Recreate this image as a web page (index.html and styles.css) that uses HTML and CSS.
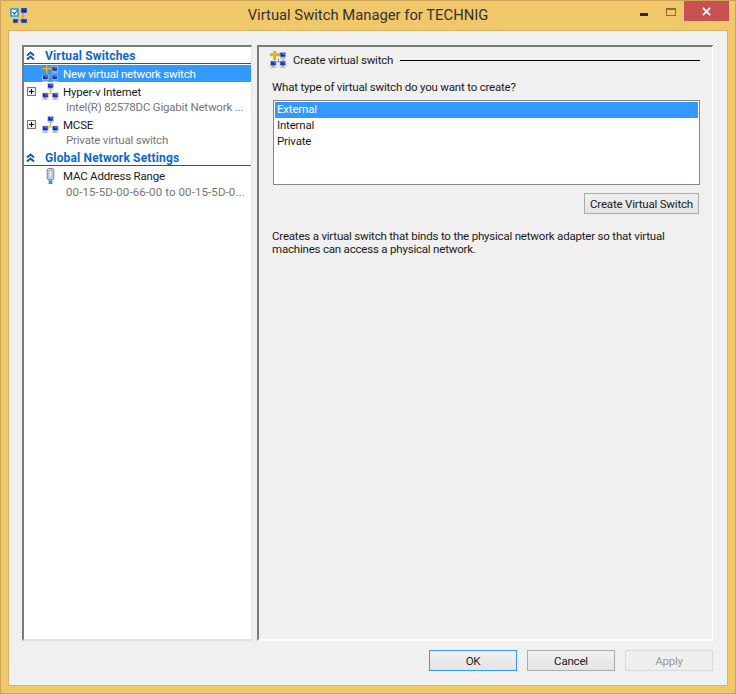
FILE: index.html
```html
<!DOCTYPE html>
<html lang="en">
<head>
    <meta charset="UTF-8">
    <meta name="viewport" content="width=device-width, initial-scale=1.0">
    <title>Virtual Switch Manager for TECHNIG</title>
    <link rel="stylesheet" href="styles.css">
</head>
<body>
    <svg class="defs" width="0" height="0">
        <symbol id="monitor" viewBox="0 0 8 8">
            <rect x="0" y="0" width="7" height="6" fill="#a9bbe0"/>
            <rect x="1" y="1" width="5" height="4" fill="#1a2fb0"/>
            <rect x="3" y="1" width="3" height="2" fill="#3f6fe0"/>
            <rect x="2" y="6" width="3" height="1" fill="#9a9a9a"/>
            <rect x="0" y="7" width="7" height="1" fill="#c4c4c4"/>
        </symbol>
        <symbol id="net-switch" viewBox="0 0 18 18">
            <path d="M9 7v4M4 11.500h11M4 11v1M14 11v1" stroke="#d9a227" stroke-width="1" fill="none"/>
            <use href="#monitor" x="5.500" y="0" width="8" height="8"/>
            <use href="#monitor" x="0" y="10" width="8" height="8"/>
            <use href="#monitor" x="10.500" y="10" width="8" height="8"/>
        </symbol>
        <symbol id="net-new" viewBox="0 0 18 18">
            <path d="M9 8v4M5 11.500h10M14 8v3" stroke="#8a8a8a" stroke-width="1" fill="none"/>
            <use href="#monitor" x="10" y="1" width="8" height="8"/>
            <use href="#monitor" x="0" y="10" width="8" height="8"/>
            <use href="#monitor" x="10" y="10" width="8" height="8"/>
            <path d="M4 0h2v3h4v2H6v4H4V5H0V3h4z" fill="#f6c51e" stroke="#a87a10" stroke-width="0.600"/>
        </symbol>
        <symbol id="chevrons" viewBox="0 0 9 9">
            <path d="M1 4.500l3.500-3 3.500 3M1 8.500l3.500-3 3.500 3" stroke="#0a5fb4" stroke-width="2" fill="none"/>
        </symbol>
        <symbol id="plus-box" viewBox="0 0 9 9">
            <rect x="0.500" y="0.500" width="8" height="8" fill="#e9e9e9" stroke="#777"/>
            <path d="M2 4.500h5M4.500 2v5" stroke="#111" stroke-width="1"/>
        </symbol>
    </svg>

    <div class="window">
        <div class="titlebar">
            <svg class="app-icon" width="18" height="16" viewBox="0 0 18 16">
                <path d="M13 5v6M5 12h8" stroke="#8a8a8a" fill="none"/>
                <rect x="11" y="0" width="6" height="5" fill="#1a2fb0" stroke="#9fb2d8" stroke-width="0.500"/>
                <rect x="3" y="11" width="5" height="4" fill="#1a2fb0" stroke="#9fb2d8" stroke-width="0.500"/>
                <rect x="11" y="11" width="6" height="4" fill="#1a2fb0" stroke="#9fb2d8" stroke-width="0.500"/>
                <rect x="1" y="1" width="7" height="7" fill="#fff" stroke="#1e9be0" stroke-width="1.500"/>
                <path d="M2.500 4l2 2 3-4" stroke="#1a5fb0" stroke-width="1.200" fill="none"/>
            </svg>
            <div class="title-text">Virtual Switch Manager for TECHNIG</div>
            <div class="caption-btns">
                <div class="caption-min"><span></span></div>
                <div class="caption-max"><span></span></div>
                <div class="caption-close">
                    <svg width="9" height="9" viewBox="0 0 10 10">
                        <path d="M1 1l8 8M9 1l-8 8" stroke="#fff" stroke-width="2"/>
                    </svg>
                </div>
            </div>
        </div>

        <div class="client">
            <div class="panels">
                <div class="sidebar">
                    <div class="section-head">
                        <svg class="chevrons" width="9" height="9"><use href="#chevrons"/></svg>
                        <span>Virtual Switches</span>
                    </div>
                    <div class="tree-row selected">
                        <svg class="node-icon" width="17" height="17"><use href="#net-new"/></svg>
                        <span class="row-label">New virtual network switch</span>
                    </div>
                    <div class="tree-row">
                        <svg class="expander" width="9" height="9"><use href="#plus-box"/></svg>
                        <svg class="node-icon" width="17" height="17"><use href="#net-switch"/></svg>
                        <span class="row-label">Hyper-v Internet</span>
                    </div>
                    <div class="tree-sub">Intel(R) 82578DC Gigabit Network ...</div>
                    <div class="tree-row">
                        <svg class="expander" width="9" height="9"><use href="#plus-box"/></svg>
                        <svg class="node-icon" width="17" height="17"><use href="#net-switch"/></svg>
                        <span class="row-label">MCSE</span>
                    </div>
                    <div class="tree-sub">Private virtual switch</div>
                    <div class="section-head">
                        <svg class="chevrons" width="9" height="9"><use href="#chevrons"/></svg>
                        <span>Global Network Settings</span>
                    </div>
                    <div class="tree-row">
                        <svg class="node-icon" width="17" height="17" viewBox="0 0 18 18">
                            <rect x="5.500" y="0.500" width="7" height="12" rx="2" fill="#d4dbe2" stroke="#6f7c88"/>
                            <rect x="7.500" y="2.500" width="3" height="8" fill="#f4f6f8" stroke="#8f9aa5" stroke-width="0.700"/>
                            <rect x="7" y="13" width="4" height="4" fill="#2e9be6"/>
                        </svg>
                        <span class="row-label">MAC Address Range</span>
                    </div>
                    <div class="tree-sub mac-range">00-15-5D-00-66-00 to 00-15-5D-0...</div>
                </div>

                <div class="content">
                    <div class="content-head">
                        <svg class="node-icon" width="17" height="17"><use href="#net-new"/></svg>
                        <span>Create virtual switch</span>
                        <div class="head-rule"></div>
                    </div>
                    <div class="question">What type of virtual switch do you want to create?</div>
                    <div class="listbox">
                        <div class="list-item selected">External</div>
                        <div class="list-item">Internal</div>
                        <div class="list-item">Private</div>
                    </div>
                    <div class="create-row">
                        <button class="btn create-btn">Create Virtual Switch</button>
                    </div>
                    <p class="description">Creates a virtual switch that binds to the physical network adapter so that virtual machines can access a physical network.</p>
                </div>
            </div>

            <div class="footer">
                <button class="btn dialog-btn default">OK</button>
                <button class="btn dialog-btn">Cancel</button>
                <button class="btn dialog-btn disabled">Apply</button>
            </div>
        </div>
    </div>
</body>
</html>
```

FILE: styles.css
```css
* {
    box-sizing: border-box;
    margin: 0;
    padding: 0;
}

body {
    font-family: Roboto, "Open Sans", sans-serif;
    font-size: 11.5px;
    letter-spacing: -0.2px;
    color: #1a1a1a;
    background-color: #f0c869;
    width: 736px;
    height: 694px;
    overflow: hidden;
}

.defs {
    display: block;
    height: 0;
}

.window {
    width: 736px;
    height: 694px;
    display: flex;
    flex-direction: column;
    background-color: #f0c869;
    border: 1px solid #cda458;
    padding: 0 7px 7px;
}

/* title bar */
.titlebar {
    position: relative;
    height: 29px;
    flex: none;
}

.app-icon {
    position: absolute;
    left: 2px;
    top: 7px;
}

.title-text {
    text-align: center;
    font-size: 14.8px;
    letter-spacing: 0;
    line-height: 29px;
    color: #333;
}

.caption-btns {
    position: absolute;
    right: -1px;
    top: 0;
    display: flex;
    align-items: flex-start;
}

.caption-min {
    width: 26px;
    height: 20px;
    display: flex;
    justify-content: center;
}

.caption-min span {
    display: block;
    width: 8px;
    height: 3px;
    margin-top: 12px;
    background-color: #2b2b2b;
}

.caption-max {
    width: 27px;
    height: 20px;
    display: flex;
    justify-content: center;
}

.caption-max span {
    display: block;
    width: 10px;
    height: 8px;
    margin-top: 7px;
    border: 1px solid #8a6f3a;
    border-top-width: 2px;
}

.caption-close {
    width: 45px;
    height: 20px;
    background-color: #c75050;
    display: flex;
    justify-content: center;
    align-items: center;
}

/* client area */
.client {
    flex: 1;
    display: flex;
    flex-direction: column;
    background-color: #f0f0f0;
    border: 1px solid #d9b262;
    padding: 14px 14px 14px 13px;
}

.panels {
    display: flex;
    gap: 5px;
    height: 596px;
}

.sidebar {
    width: 230px;
    background-color: #fff;
    border-top: 2px solid #7a7a7a;
    border-left: 2px solid #7a7a7a;
    border-right: 1px solid #e3e3e3;
    border-bottom: 2px solid #e3e3e3;
}

.section-head {
    height: 17px;
    display: flex;
    align-items: center;
    border-bottom: 1px solid #0a5fb4;
    font-weight: 700;
    font-size: 12px;
    letter-spacing: 0.15px;
    color: #0a68c8;
    padding: 1px 0 0 2px;
    margin-bottom: 1px;
}

.tree-sub + .section-head {
    margin-top: 1px;
}

.chevrons {
    flex: none;
    margin-right: 10px;
}

.tree-row {
    position: relative;
    height: 18px;
    display: flex;
    align-items: center;
    padding-left: 18px;
}

.tree-row.selected {
    background-color: #3399ff;
    color: #fff;
    height: 17px;
}

.expander {
    position: absolute;
    left: 3px;
    top: 5px;
}

.expander + .node-icon + .row-label {
    margin-top: 2px;
}

.node-icon {
    flex: none;
}

.row-label {
    margin-left: 4px;
}

.tree-sub {
    height: 15px;
    line-height: 15px;
    padding-left: 42px;
    color: #767676;
    white-space: nowrap;
}

.tree-sub.mac-range {
    letter-spacing: 0.1px;
}

.content {
    flex: 1;
    background-color: #f0f0f0;
    border-top: 2px solid #7a7a7a;
    border-left: 2px solid #7a7a7a;
    border-right: 1px solid #fff;
    border-bottom: 2px solid #fff;
    padding: 4px 12px 0 13px;
}

.content-head {
    display: flex;
    align-items: center;
    height: 17px;
}

.content-head .node-icon {
    margin-left: -2px;
}

.content-head span {
    margin-left: 6px;
    white-space: nowrap;
}

.head-rule {
    flex: 1;
    height: 1px;
    margin: 2px 0 0 7px;
    background-color: #000;
}

.question {
    margin-top: 10px;
    line-height: 18px;
}

.listbox {
    height: 85px;
    margin: 4px 0 0 1px;
    background-color: #fff;
    border: 1px solid #82858c;
    padding: 1px;
}

.list-item {
    height: 16px;
    line-height: 14px;
    padding-left: 2px;
}

.list-item.selected {
    background-color: #3399ff;
    color: #fff;
}

.create-row {
    display: flex;
    justify-content: flex-end;
    margin-top: 8px;
    padding-right: 1px;
}

.btn {
    font-family: inherit;
    font-size: 11.5px;
    letter-spacing: inherit;
    color: #1a1a1a;
    height: 21px;
    background: linear-gradient(to bottom, #f0f0f0, #e5e5e5);
    border: 1px solid #acacac;
}

.create-btn {
    width: 115px;
}

.description {
    margin-top: 16px;
    line-height: 13px;
    width: 420px;
}

.footer {
    display: flex;
    justify-content: flex-end;
    gap: 10px;
    margin-top: 9px;
}

.dialog-btn {
    width: 88px;
}

.dialog-btn.default {
    border-color: #3399ff;
}

.dialog-btn.disabled {
    color: #9a9a9a;
    border-color: #d9d9d9;
    background: #efefef;
}
```
